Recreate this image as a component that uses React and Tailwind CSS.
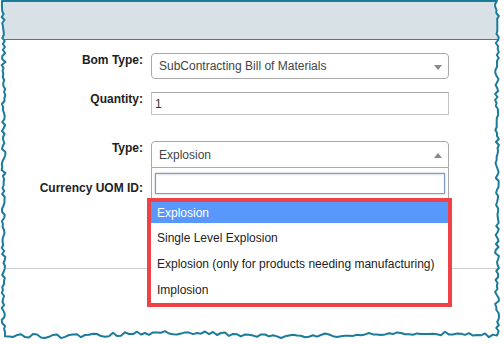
// Select dropdown screenshot with torn paper edge

const rnd = (i, s) => {
    const x = Math.sin(i * 12.9898 + s * 78.233) * 43758.5453
    return x - Math.floor(x)
}

function tornPath() {
    const pts = [[2, 1], [497, 1]]
    let i = 0
    for (let y = 4; y < 333; y += 3) pts.push([495 + rnd(i++, 2) * 4, y])
    for (let x = 497; x > 3; x -= 4) pts.push([x, 332.5 + rnd(i++, 3) * 4 + Math.sin(x / 37) * 1.6])
    for (let y = 332; y > 2; y -= 3) pts.push([1.5 + rnd(i++, 4) * 4, y])
    return "M" + pts.map(p => p[0].toFixed(1) + " " + p[1].toFixed(1)).join("L") + "Z"
}

function TornFrame() {
    const d = tornPath()
    return (
        <svg className="absolute inset-0 pointer-events-none" width="504" height="344" viewBox="0 0 504 344">
            <path d={"M-2 -2H506V346H-2Z " + d} fill="#ffffff" fillRule="evenodd" />
            <path d={d} fill="none" stroke="#1a7b9b" strokeWidth="2" strokeLinejoin="round" />
        </svg>
    )
}

function Arrow({ up }) {
    return (
        <svg width="8" height="5" viewBox="0 0 8 5" className="absolute right-[6px] top-[11px]">
            <path d={up ? "M0 5L4 0L8 5Z" : "M0 0L8 0L4 5Z"} fill="#888" />
        </svg>
    )
}

function Row({ label, children, className }) {
    return (
        <div className={"flex flex-row items-start " + className}>
            <div className="w-[143px] text-right font-bold text-[12px] leading-[14px] text-[#222]">{label}</div>
            <div className="ml-[8px] w-[298px] relative">{children}</div>
        </div>
    )
}

export default function App() {
    const options = ["Single Level Explosion", "Explosion (only for products needing manufacturing)", "Implosion"]
    return (
        <div className="relative w-[504px] h-[344px] overflow-hidden bg-white font-['Liberation_Sans',Arial,sans-serif]">
            <div className="h-[40px] bg-[#d7e1e6] border-b border-[#2f84a0]"></div>

            <div className="pt-[13px]">
                <Row label="Bom Type:" className="mb-[13px]">
                    <div className="relative h-[26px] border border-[#aaa] rounded-[4px] bg-white pl-[7px] flex items-center text-[12px] text-[#444]">
                        SubContracting Bill of Materials
                        <Arrow />
                    </div>
                </Row>
                <Row label="Quantity:" className="mb-[26px]">
                    <div className="h-[23px] border border-[#c4c4c4] border-t-[#a8a8a8] bg-white pl-[3px] flex items-center text-[12px] text-[#333]">1</div>
                </Row>
                <Row label="Type:" className="mb-[13px] relative z-10">
                    <div className="relative h-[27px] border border-[#aaa] rounded-t-[4px] bg-white pl-[7px] flex items-center text-[12px] text-[#444]">
                        Explosion
                        <Arrow up />
                    </div>
                    {/* open dropdown */}
                    <div className="absolute left-0 top-full w-full bg-white border-x border-[#aaa] pt-[5px] px-[3px]">
                        <div className="h-[21px] border border-[#7f9bc6] shadow-[0_0_2px_rgba(80,120,180,0.5),inset_0_1px_2px_rgba(0,0,0,0.12)] bg-white"></div>
                        <div className="mt-[4px] -ml-[8px] w-[305px] border-4 border-[#ef4247] bg-white text-[12px] text-[#222]">
                            <div className="h-[21px] bg-[#5897fb] text-white pl-[6px] flex items-center">Explosion</div>
                            <div className="h-[2px]"></div>
                            {options.map(o => (
                                <div key={o} className="h-[26px] pl-[6px] flex items-center">{o}</div>
                            ))}
                        </div>
                    </div>
                </Row>
                <Row label="Currency UOM ID:">
                    <div className="h-[23px] border border-[#c4c4c4] bg-white"></div>
                </Row>
                <div className="mt-[64px] border-t border-[#d0d0d0]"></div>
            </div>

            <TornFrame />
        </div>
    )
}
